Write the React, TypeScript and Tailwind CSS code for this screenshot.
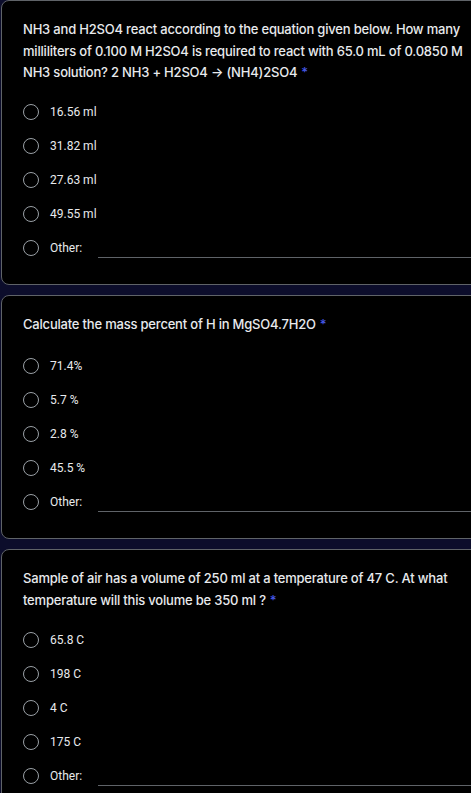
import React from 'react';

type Question = {
  lines: string[];
  options: string[];
  gap: string;
};

const questions: Question[] = [
  {
    lines: [
      'NH3 and H2SO4 react according to the equation given below. How many',
      'milliliters of 0.100 M H2SO4 is required to react with 65.0 mL of 0.0850 M',
      'NH3 solution? 2 NH3 + H2SO4 → (NH4)2SO4',
    ],
    options: ['16.56 ml', '31.82 ml', '27.63 ml', '49.55 ml'],
    gap: 'mt-[11px]',
  },
  {
    lines: ['Calculate the mass percent of H in MgSO4.7H2O'],
    options: ['71.4%', '5.7 %', '2.8 %', '45.5 %'],
    gap: 'mt-[14px]',
  },
  {
    lines: [
      'Sample of air has a volume of 250 ml at a temperature of 47 C. At what',
      'temperature will this volume be 350 ml ?',
    ],
    options: ['65.8 C', '198 C', '4 C', '175 C'],
    gap: 'mt-[12px]',
  },
];

const Radio = () => (
  <span className="w-4 h-4 rounded-full border-[1.5px] border-[#9aa0a6] shrink-0" />
);

const QuestionCard = ({ q }: { q: Question }) => (
  <div className="ml-px w-[490px] bg-black border border-[#5f6368] rounded-lg pt-[18px] pb-[19px] pl-[21px]">
    <div className="text-[13px] leading-[21.5px] tracking-[-0.2px] text-[#e8eaed] font-['Inter',sans-serif] font-medium">
      {q.lines.map((line, i) => (
        <div key={i} className="whitespace-nowrap">
          {line}
          {i === q.lines.length - 1 && <span className="text-[#4658e8] ml-1">*</span>}
        </div>
      ))}
    </div>
    <div className={q.gap}>
      {q.options.map(opt => (
        <div key={opt} className="h-[34px] flex items-center">
          <Radio />
          <span className="ml-[11px] text-[12px] text-[#e8eaed] font-['Roboto',sans-serif]">{opt}</span>
        </div>
      ))}
      <div className="h-[34px] flex items-center">
        <Radio />
        <span className="ml-[11px] text-[12px] text-[#e8eaed] font-['Roboto',sans-serif]">Other:</span>
        <div className="ml-[16px] self-end mb-[7px] flex-1 border-b border-[#5f6368]" />
      </div>
    </div>
  </div>
);

export default function App() {
  return (
    <div className="w-[471px] h-[793px] overflow-hidden bg-[#0c0d2b] flex flex-col gap-[10px]">
      {questions.map((q, i) => (
        <QuestionCard key={i} q={q} />
      ))}
    </div>
  );
}
